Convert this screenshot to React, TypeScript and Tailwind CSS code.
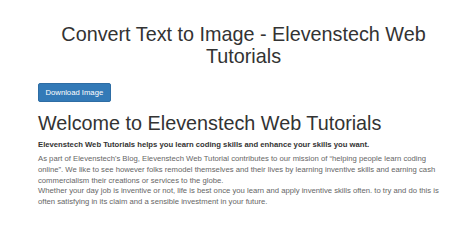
export default function App() {
  return (
    <div className="min-h-[226px] bg-white font-['Liberation_Sans',Arial,sans-serif] pl-[38px] pr-[25px] pt-[24px]">
      {/* ── Page title ── */}
      <h1 className="text-center text-[19.8px] leading-[21.5px] font-normal text-[#333]">
        Convert Text to Image - Elevenstech Web Tutorials
      </h1>

      <button className="mt-[16px] h-[19px] px-[6.5px] rounded-[2px] border border-[#2e6da4] bg-[#337ab7] text-white text-[7.7px] leading-none">
        Download Image
      </button>

      <h1 className="mt-[11.2px] text-[19.8px] leading-[21.5px] font-normal text-[#333]">
        Welcome to Elevenstech Web Tutorials
      </h1>

      <p className="mt-[5.5px] text-[7.7px] leading-[10.8px] font-bold text-[#333]">
        Elevenstech Web Tutorials helps you learn coding skills and enhance your skills you want.
      </p>

      <p className="mt-[3.2px] text-[7.7px] leading-[10.7px] text-[#666]">
        As part of Elevenstech's Blog, Elevenstech Web Tutorial contributes to our mission of “helping people learn coding
        online”. We like to see however folks remodel themselves and their lives by learning inventive skills and earning cash
        commercialism their creations or services to the globe.
        <br />
        Whether your day job is inventive or not, life is best once you learn and apply inventive skills often. to try and do this is
        often satisfying in its claim and a sensible investment in your future.
      </p>
    </div>
  );
}
